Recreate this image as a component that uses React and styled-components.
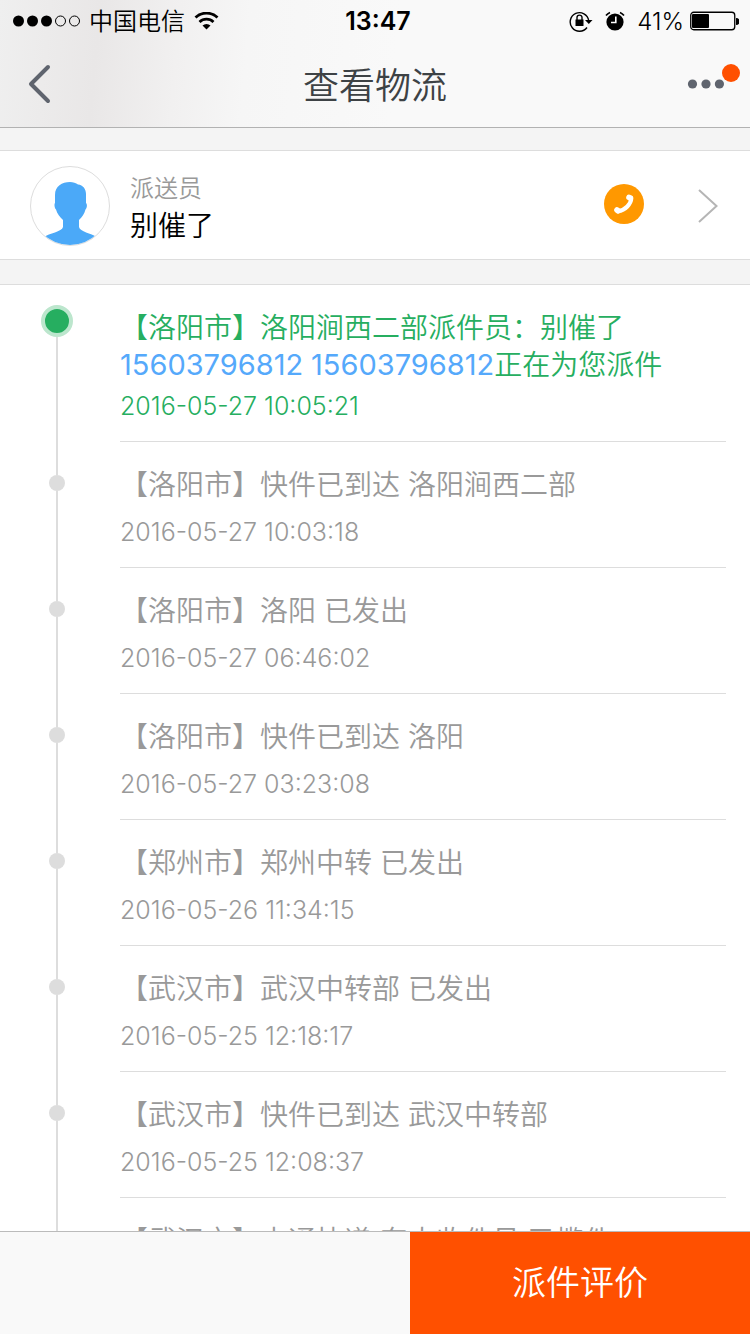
import React from 'react';
import styled, {css, createGlobalStyle} from 'styled-components';

const records = [
    {
        text: '【洛阳市】洛阳涧西二部派件员：别催了',
        phones: ['15603796812', '15603796812'],
        tail: '正在为您派件',
        time: '2016-05-27 10:05:21',
    },
    {text: '【洛阳市】快件已到达 洛阳涧西二部', time: '2016-05-27 10:03:18'},
    {text: '【洛阳市】洛阳 已发出', time: '2016-05-27 06:46:02'},
    {text: '【洛阳市】快件已到达 洛阳', time: '2016-05-27 03:23:08'},
    {text: '【郑州市】郑州中转 已发出', time: '2016-05-26 11:34:15'},
    {text: '【武汉市】武汉中转部 已发出', time: '2016-05-25 12:18:17'},
    {text: '【武汉市】快件已到达 武汉中转部', time: '2016-05-25 12:08:37'},
    {text: '【武汉市】中通快递 东大收件员 已揽件'},
];

function StatusBar() {
    return (
        <StatusWrapper>
            <StatusGroup>
                <svg width="68" height="12" viewBox="0 0 68 12">
                    <circle cx="5.5" cy="6" r="5.5" />
                    <circle cx="19.5" cy="6" r="5.5" />
                    <circle cx="33.5" cy="6" r="5.5" />
                    <circle cx="47.5" cy="6" r="5" fill="none" stroke="#000" />
                    <circle cx="61.5" cy="6" r="5" fill="none" stroke="#000" />
                </svg>
                <StatusText>中国电信</StatusText>
                <svg width="26" height="18" viewBox="0 0 26 18" fill="none" stroke="#000" strokeWidth="2.8">
                    <path d="M2.500 5.500a16 16 0 0 1 22 0" />
                    <path d="M6.500 10a10.200 10.200 0 0 1 14 0" />
                    <path d="M13.500 17.500l-4-4a5.800 5.800 0 0 1 8 0z" fill="#000" stroke="none" />
                </svg>
            </StatusGroup>
            <Clock>13:47</Clock>
            <StatusGroup $end>
                <svg width="24" height="22" viewBox="0 0 24 22" fill="none" stroke="#000" strokeWidth="1.4">
                    <path d="M18 17.500a9.300 9.300 0 1 1 1.700-7" />
                    <path d="M16 10h7.500l-3.700 4z" fill="#000" stroke="none" />
                    <rect x="6.500" y="9.500" width="8" height="6.500" fill="#000" stroke="none" />
                    <path d="M8 10V7.600a2.500 2.500 0 0 1 5 0V10" />
                </svg>
                <AlarmIcon width="20" height="20" viewBox="0 0 20 20">
                    <circle cx="10" cy="11" r="8.600" />
                    <path d="M1 4.600A10 10 0 0 1 5 1.400M19 4.600A10 10 0 0 0 15 1.400" fill="none" stroke="#000" strokeWidth="1.600" />
                    <path d="M10.800 5.500V11.500H6" fill="none" stroke="#fff" strokeWidth="1.600" />
                </AlarmIcon>
                <StatusText>41%</StatusText>
                <svg width="49" height="20" viewBox="0 0 49 20">
                    <rect x="0.750" y="1.250" width="44" height="17.500" rx="3" fill="none" stroke="#000" strokeWidth="1.300" />
                    <rect x="2" y="3" width="17" height="14" rx="1" />
                    <path d="M46 7a3.200 3.200 0 0 1 0 7z" />
                </svg>
            </StatusGroup>
        </StatusWrapper>
    )
}

function Header() {
    return (
        <HeaderWrapper>
            <StatusBar />
            <Nav>
                <IconButton aria-label="返回">
                    <svg width="26" height="40" viewBox="0 0 26 40" fill="none" stroke="#5f646e" strokeWidth="4" strokeLinecap="round" strokeLinejoin="round">
                        <path d="M22 3L5 20l17 17" />
                    </svg>
                </IconButton>
                <Title>查看物流</Title>
                <IconButton aria-label="更多" $end>
                    <svg width="38" height="10" viewBox="0 0 38 10" fill="#5f646e">
                        <circle cx="6.500" cy="5" r="4.600" />
                        <circle cx="20" cy="5" r="4.600" />
                        <circle cx="33.400" cy="5" r="4.600" />
                    </svg>
                    <Badge />
                </IconButton>
            </Nav>
        </HeaderWrapper>
    )
}

function Courier() {
    return (
        <CourierPanel>
            <Avatar>
                <svg width="78" height="78" viewBox="0 0 78 78" fill="#4ba9f8">
                    <path d="M24 28C24 19 31 15 39 15C42 15 45 16 47 17.500C52 18 55 22 55 27V36C56.500 37 56 41 54.500 42.500C53.500 47 51 50 48 53V60C49 65 60 66 66 70C58 76 49 79 39 79S20 76 13 70C18 66 31 65 32 60V53C29 50 26 47 25 42.500C23.500 41 23 37 24 36z" />
                </svg>
            </Avatar>
            <CourierText>
                <Role>派送员</Role>
                <Name>别催了</Name>
            </CourierText>
            <CallButton aria-label="拨打电话">
                <svg width="22" height="22" viewBox="0 0 22 22" fill="none" stroke="#fff" strokeLinecap="round">
                    <path d="M18.300 5C18 11 12.500 17 5 18.300" strokeWidth="4.200" />
                    <path d="M16 4.400l1.200 0.400M4 17l1 0.800" strokeWidth="5.600" />
                </svg>
            </CallButton>
            <IconButton aria-label="查看派送员">
                <svg width="20" height="34" viewBox="0 0 20 34" fill="none" stroke="#b5b5b5" strokeWidth="2">
                    <path d="M1 1l17.500 16L1 33" />
                </svg>
            </IconButton>
        </CourierPanel>
    )
}

function Record({record, active}) {
    return (
        <Item $active={active}>
            <Rail>
                <Line $lead $hidden={active} />
                <Dot $active={active} />
                <Line />
            </Rail>
            <Body>
                <Message>
                    {record.text}
                    {record.phones && record.phones.map((phone, i) => (
                        <React.Fragment key={i}>
                            {' '}<PhoneLink href={'tel:' + phone}>{phone}</PhoneLink>
                        </React.Fragment>
                    ))}
                    {record.tail}
                </Message>
                {record.time && <Time $active={active}>{record.time}</Time>}
            </Body>
        </Item>
    )
}

function App() {
    return (
        <>
            <GlobalStyle />
            <Page>
                <Header />
                <Courier />
                <Records>
                    {records.map((record, i) => (
                        <Record key={i} record={record} active={i === 0} />
                    ))}
                </Records>
                <Footer>
                    <RateButton>派件评价</RateButton>
                </Footer>
            </Page>
        </>
    )
}

const GlobalStyle = createGlobalStyle`
    * {
        box-sizing: border-box;
    }
    body {
        margin: 0;
        background: #f4f4f4;
        font-family: Inter, 'Noto Sans CJK SC', sans-serif;
    }
    button {
        border: 0;
        padding: 0;
        background: none;
        font-family: inherit;
        cursor: pointer;
    }
    svg {
        display: block;
        flex: none;
    }
`;

const Page = styled.div`
    height: 100vh;
    display: flex;
    flex-direction: column;
`;

const HeaderWrapper = styled.header`
    flex: none;
    background: linear-gradient(95deg, #efefef 0, #e9e7e7 100px, #f1f0f0 180px, #f6f6f6 250px, #f9f9f9 400px);
    border-bottom: 1px solid #b2b2b2;
`;

const StatusWrapper = styled.div`
    height: 40px;
    padding: 0 11px 0 13px;
    display: grid;
    grid-template-columns: 1fr auto 1fr;
    align-items: center;
    font-size: 24px;
    line-height: 40px;
`;

const StatusGroup = styled.div`
    display: flex;
    align-items: center;
    gap: 8px;
    ${props => props.$end && css`
        gap: 6px;
        justify-content: flex-end;
    `}
`;

const StatusText = styled.span`
    padding-top: 2px;
    font-weight: 350;
    white-space: nowrap;
`;

const Clock = styled.span`
    padding-left: 4px;
    font-size: 25px;
    font-weight: 600;
`;

const AlarmIcon = styled.svg`
    margin: 0 6px;
`;

const Nav = styled.nav`
    height: 87px;
    padding: 0 26px;
    display: grid;
    grid-template-columns: 1fr auto 1fr;
    align-items: center;
`;

const IconButton = styled.button`
    position: relative;
    ${props => props.$end && css`
        justify-self: end;
    `}
`;

const Badge = styled.span`
    width: 18px;
    height: 18px;
    border-radius: 50%;
    background: #ff5000;
    position: absolute;
    top: -15px;
    right: -16px;
`;

const Title = styled.h1`
    margin: 0;
    padding-top: 4px;
    color: #3d4245;
    font-size: 36px;
    font-weight: 350;
    line-height: 52px;
`;

const CourierPanel = styled.section`
    flex: none;
    margin: 22px 0 24px;
    padding: 15px 32px 13px 30px;
    display: flex;
    align-items: center;
    background: #fff;
    border-top: 1px solid #ddd;
    border-bottom: 1px solid #ddd;
`;

const Avatar = styled.div`
    width: 80px;
    height: 80px;
    border: 1px solid #ddd;
    border-radius: 50%;
    overflow: hidden;
`;

const CourierText = styled.div`
    flex: 1;
    margin-left: 20px;
    padding-top: 4px;
`;

const Role = styled.div`
    color: #999;
    font-size: 24px;
    font-weight: 350;
    line-height: 36px;
`;

const Name = styled.div`
    color: #000;
    font-size: 28px;
    font-weight: 350;
    line-height: 38px;
`;

const CallButton = styled.button`
    width: 40px;
    height: 40px;
    margin-right: 54px;
    margin-bottom: 4px;
    display: flex;
    align-items: center;
    justify-content: center;
    border-radius: 50%;
    && {
        background: #ff9800;
    }
`;

const Records = styled.ol`
    flex: 1;
    min-height: 0;
    margin: 0;
    padding: 0;
    list-style: none;
    overflow-y: auto;
    scrollbar-width: none;
    background: #fff;
    border-top: 1px solid #ddd;
`;

const Item = styled.li`
    display: flex;
    color: ${props => props.$active ? '#26ae60' : '#999'};
`;

const Rail = styled.div`
    width: 114px;
    margin-right: 6px;
    display: flex;
    flex-direction: column;
    align-items: center;
`;

const Line = styled.div`
    width: 2px;
    flex: 1;
    background: #ddd;
    ${props => props.$lead && css`
        flex: none;
        height: 33px;
    `}
    ${props => props.$hidden && css`
        height: 20px;
        background: none;
    `}
`;

const Dot = styled.div`
    width: 16px;
    height: 16px;
    border-radius: 50%;
    background: #ddd;
    ${props => props.$active && css`
        width: 32px;
        height: 32px;
        background: #26ae60;
        border: 4px solid #bce6cd;
    `}
`;

const Body = styled.div`
    flex: 1;
    margin-right: 24px;
    padding: 25px 0 21px;
    border-bottom: 1px solid #ddd;
`;

const Message = styled.p`
    margin: 0;
    font-size: 28px;
    font-weight: 350;
    line-height: 37px;
`;

const PhoneLink = styled.a`
    color: #55a9fb;
    font-size: 29px;
    font-weight: 400;
    line-height: 30px;
    text-decoration: none;
`;

const Time = styled.time`
    display: block;
    margin-top: ${props => props.$active ? '8px' : '14px'};
    font-size: 25px;
    font-weight: 300;
    line-height: 28px;
`;

const Footer = styled.footer`
    flex: none;
    display: flex;
    justify-content: flex-end;
    background: #f9f9f9;
    border-top: 1px solid #bbb;
`;

const RateButton = styled.button`
    width: 340px;
    height: 102px;
    color: #fff;
    font-size: 34px;
    font-weight: 350;
    line-height: 50px;
    && {
        background: #ff5000;
    }
`;

export default App;
